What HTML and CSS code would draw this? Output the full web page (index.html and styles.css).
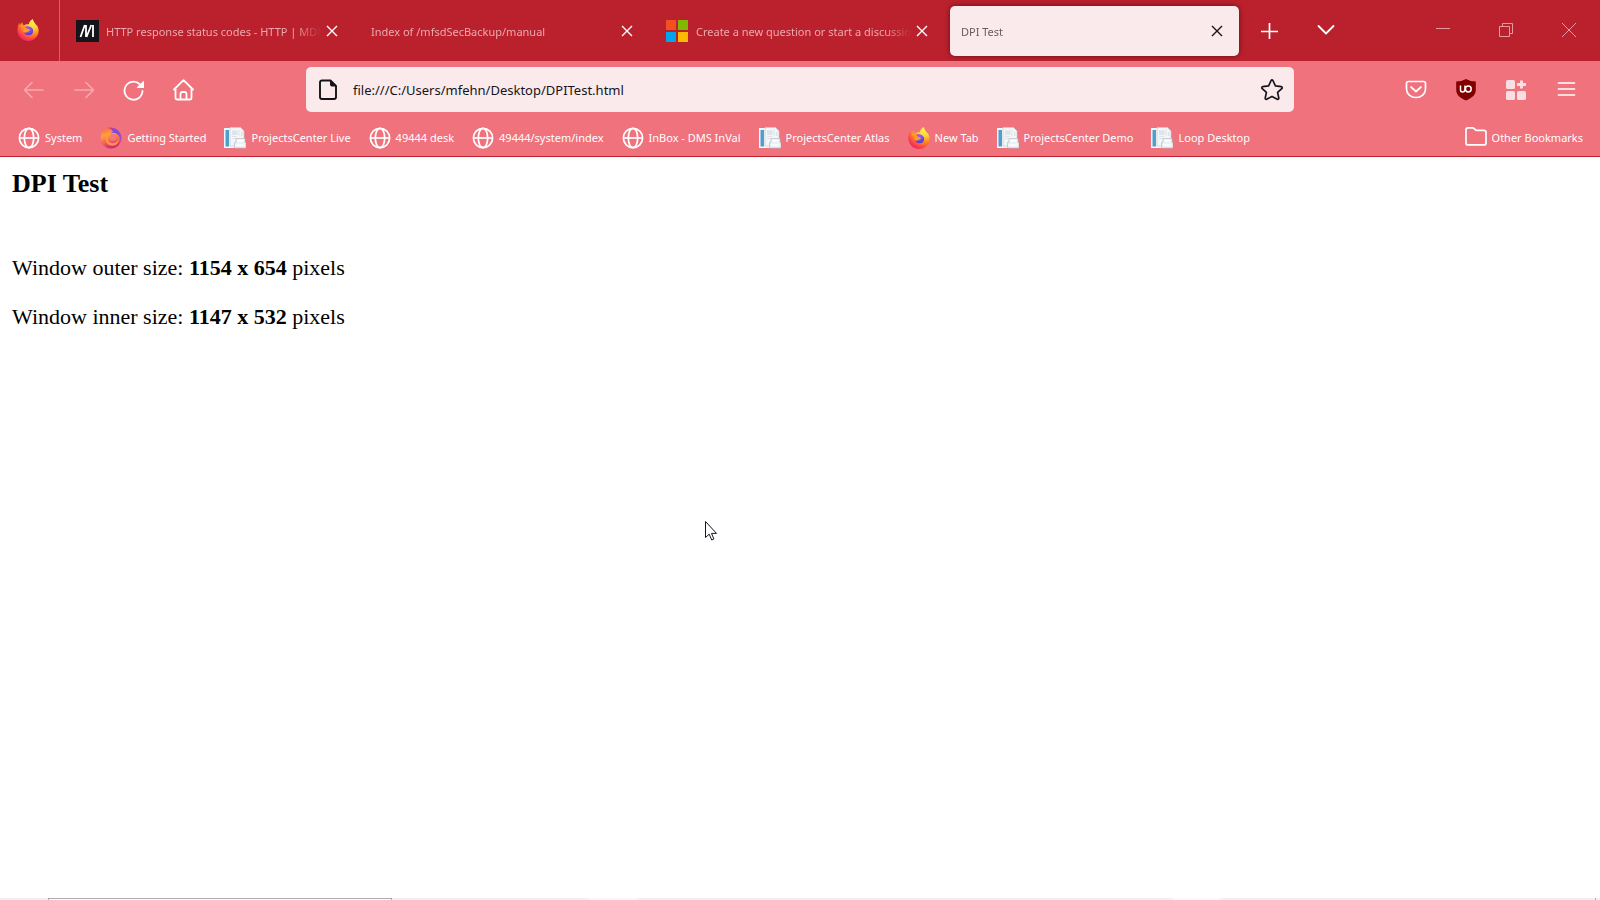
FILE: index.html
```html
<!DOCTYPE html>
<html lang="en">
<head>
<meta charset="utf-8">
<title>DPI Test</title>
<link rel="stylesheet" href="styles.css">
</head>
<body>
<svg class="defs" aria-hidden="true">
  <defs>
    <radialGradient id="flame" cx="75%" cy="10%" r="105%">
      <stop offset="0" stop-color="#fff44f"/><stop offset=".3" stop-color="#ffd03a"/><stop offset=".55" stop-color="#ff8a1f"/><stop offset=".8" stop-color="#ff3c4a"/><stop offset="1" stop-color="#e31587"/>
    </radialGradient>
    <radialGradient id="core" cx="45%" cy="25%" r="80%">
      <stop offset="0" stop-color="#a95af5"/><stop offset=".6" stop-color="#6d4be8"/><stop offset="1" stop-color="#4a3ab8"/>
    </radialGradient>
    <linearGradient id="swirl" x1="0" y1="0" x2=".3" y2="1">
      <stop offset="0" stop-color="#ff5a40"/><stop offset=".4" stop-color="#ffa03c"/><stop offset=".7" stop-color="#f8684e"/><stop offset="1" stop-color="#d82878"/>
    </linearGradient>
    <linearGradient id="tail" x1="0" y1="0" x2="1" y2="1">
      <stop offset="0" stop-color="#e0406a"/><stop offset=".4" stop-color="#7b46f2"/><stop offset="1" stop-color="#b04bc0"/>
    </linearGradient>
    <symbol id="firefox" viewBox="0 0 22 22">
      <path fill="url(#flame)" d="M21.3 9.5C20.8 7.5 19.6 6 18.6 5.3 18.4 4.5 16.4 3.3 15.8 0 13.600 1.200 12 3.400 11.800 5.200 9.500 5 8 5.600 6.800 6.200 5.800 5.600 5.400 4.600 5.500 3.500 4.300 4 3.400 5 2.900 5.900 2.500 5.500 2.400 4.500 2.500 3.600 1 5.300.4 8.500.4 11.300.4 17.300 5.200 22 11 22S21.700 17.400 21.700 12c0-1-.1-1.700-.4-2.500z"/>
      <path fill="url(#core)" d="M7.200 8.800c1.300-1.200 3-1.600 4.800-1.400 2.400.3 4.200 2.200 4.200 4.500 0 2.600-2 4.400-4.600 4.400-2.400 0-4.300-1.300-5-3.300 1.200.8 2.900.7 3.900-.1.800-.6 1.500-.9 2.300-1.200-.1-.8-1.200-1-2.500-1-1.100 0-2.200-.9-3.100-1.900z"/>
      <path fill="#ff9a26" d="M2.700 7.200c1.900-.8 4-.6 5.300.5l2.200 2.400c1.200.1 2.300.3 2.500 1-.8.600-1.700.7-2.500 1.500-1 1-2.700 1-3.900.2-.3-1.600.2-2.700.9-3.400-1.500-.7-3.200-1-4.500-2.200z"/>
    </symbol>
    <symbol id="swirlfox" viewBox="0 0 22 22">
      <circle cx="11" cy="11" r="10.500" fill="url(#swirl)"/>
      <path fill="url(#tail)" d="M8 .900C14-.8 21.500 3.500 21.500 11c0 1.500-.3 2.800-.9 4 0-4-1.600-7.500-5.600-9-1.500-.5-3 0-4 .5.500-1 1-1.500 2-2C11.500 2.500 10 1.500 8 .900z"/>
      <path fill="#f07a78" d="M10.500 8c2-1.300 4.500-.8 5.500.7 1 1.500.8 3.300-.5 4.300-1.500 1-4 .6-4.900-.8-.8-1.200-.9-2.800-.1-4.200z"/>
      <path fill="#ffbe4a" d="M9.500 7.500c-4 3.500-2 9 3.500 8.800 3.200-.2 5-2.200 5.800-4.700.3 4.200-2.500 7.400-6.500 7.200C6 18.400 4 11.500 9.500 7.500z" opacity=".7"/>
    </symbol>
    <symbol id="globe" viewBox="0 0 22 22">
      <g fill="none" stroke="#fff" stroke-width="1.700"><circle cx="11" cy="11" r="9.600"/><ellipse cx="11" cy="11" rx="4.700" ry="9.600"/><path d="M1.500 11h19"/></g>
    </symbol>
    <symbol id="doc" viewBox="0 0 22 22">
      <path fill="#f4f7f9" d="M0 1h14v20H0z"/>
      <path fill="#4d9fd0" d="M1.500 3H5v16.500H1.500z"/>
      <path fill="#f3f5f7" stroke="#c6ced6" stroke-width=".7" d="M6 .5h10.500L20 4v15H6z"/>
      <path fill="#dfe4e9" d="M8 3.500h5.500V8H8zM8 9h5v1H8zM8 11h4v1H8zM14.500 3h1v6h-1zM17 5h1.500v4H17z"/>
      <path fill="#eef1f3" stroke="#b5bfc8" stroke-width=".7" d="M12 11.500h9v4h1V21H10.500v-5.500H12z"/>
      <path fill="#fff" d="M13.500 13h6v1.500h-6zM12 17.500h8.500v1.300H12z"/>
    </symbol>
    <symbol id="x" viewBox="0 0 12 12"><path fill="none" stroke="currentColor" stroke-width="1.400" d="M1 1l10 10M11 1L1 11"/></symbol>
  </defs>
</svg>

<header class="browser">
  <div class="titlebar">
    <button class="view" aria-label="Firefox View"><svg class="i22"><use href="#firefox"/></svg></button>
    <div class="tabs" role="tablist">
      <div class="tab" role="tab">
        <svg class="favicon" viewBox="0 0 23 22"><path fill="#15141a" d="M0 0h23v22H0z"/><path fill="none" stroke="#fff" stroke-width="1.800" d="M4.500 17L8.800 5M10 5v12M10.500 17L15.300 5M17 5v12"/></svg>
        <span class="label">HTTP response status codes - HTTP | MDN</span>
        <button class="close" aria-label="Close tab"><svg class="i12"><use href="#x"/></svg></button>
      </div>
      <div class="tab" role="tab">
        <span class="label">Index of /mfsdSecBackup/manual</span>
        <button class="close" aria-label="Close tab"><svg class="i12"><use href="#x"/></svg></button>
      </div>
      <div class="tab" role="tab">
        <svg class="favicon" viewBox="0 0 23 22"><path fill="#f25022" d="M0 0h10v10H0z"/><path fill="#7fba00" d="M12 0h10v10H12z"/><path fill="#00a4ef" d="M0 12h10v10H0z"/><path fill="#ffb900" d="M12 12h10v10H12z"/></svg>
        <span class="label">Create a new question or start a discussion</span>
        <button class="close" aria-label="Close tab"><svg class="i12"><use href="#x"/></svg></button>
      </div>
      <div class="tab active" role="tab" aria-selected="true">
        <span class="label">DPI Test</span>
        <button class="close" aria-label="Close tab"><svg class="i12"><use href="#x"/></svg></button>
      </div>
    </div>
    <div class="tabtools">
      <button class="tool" aria-label="New tab"><svg class="i18" viewBox="0 0 18 18"><path fill="none" stroke="#fff" stroke-width="1.700" d="M9.500 1v16M1 9.500h17"/></svg></button>
      <button class="tool" aria-label="List all tabs"><svg class="i18" viewBox="0 0 18 18"><path fill="none" stroke="#fff" stroke-width="1.800" stroke-linecap="round" stroke-linejoin="round" d="M1.500 4L9 11.500 16.500 4"/></svg></button>
    </div>
    <div class="winctl">
      <button aria-label="Minimize"><svg class="i14" viewBox="0 0 14 14"><path stroke="currentColor" d="M0 5.500h14"/></svg></button>
      <button aria-label="Restore"><svg class="i14" viewBox="0 0 14 14"><path fill="none" stroke="currentColor" d="M.5 3.500h10v10H.5zM3.500 3V.5h10v10H11"/></svg></button>
      <button aria-label="Close"><svg class="i14" viewBox="0 0 14 14"><path stroke="currentColor" d="M0 0l14 14M14 0L0 14"/></svg></button>
    </div>
  </div>

  <nav class="navbar">
    <div class="group">
      <button class="tool dim" disabled aria-label="Back"><svg class="i22" viewBox="0 0 22 22"><path fill="none" stroke="#fff" stroke-width="1.600" stroke-linecap="round" stroke-linejoin="round" d="M20 11H2M9 3.500L1.500 11 9 18.500"/></svg></button>
      <button class="tool dim" disabled aria-label="Forward"><svg class="i22" viewBox="0 0 22 22"><path fill="none" stroke="#fff" stroke-width="1.600" stroke-linecap="round" stroke-linejoin="round" d="M2 11h18M13 3.500l7.500 7.500-7.500 7.500"/></svg></button>
      <button class="tool" aria-label="Reload"><svg class="i22" viewBox="0 0 22 22"><path fill="none" stroke="#fff" stroke-width="1.800" stroke-linecap="round" d="M19.500 12A9 9 0 1 1 16.500 5"/><path fill="#fff" d="M20 2.200c.5-.5 1-.3 1 .4V8.500c0 .4-.2.600-.6.600h-5.800c-.7 0-.9-.6-.4-1.100z"/></svg></button>
      <button class="tool" aria-label="Home"><svg class="i22" viewBox="0 0 22 22"><path fill="none" stroke="#fff" stroke-width="1.800" stroke-linecap="round" stroke-linejoin="round" d="M1 10.500L10.500 1.200l9.500 9.300M2.500 9.500v9.500q0 1.500 1.500 1.500h13q1.500 0 1.500-1.500V9.500M7.500 20.500V15q0-2 2-2h2q2 0 2 2v5.500"/></svg></button>
    </div>
    <div class="urlbar">
      <svg class="i22" viewBox="0 0 22 22"><path fill="none" stroke="#15141a" stroke-width="1.900" stroke-linejoin="round" d="M5 1.500h8.500L19 7v11q0 2-2 2H5q-2 0-2-2V3.500q0-2 2-2z"/><path fill="#15141a" d="M13 1l6.500 6.500H15q-2 0-2-2z"/></svg>
      <input type="text" aria-label="Address" value="file:///C:/Users/mfehn/Desktop/DPITest.html">
      <button class="star" aria-label="Bookmark this page"><svg class="i22" viewBox="0 0 22 22"><path fill="none" stroke="#15141a" stroke-width="1.700" stroke-linejoin="round" d="M10.100 1.500q.9-1.300 1.800 0l2.500 5.400 6 .8q1.300.5.600 1.600l-4.400 4 1.200 5.900q-.1 1.400-1.500 1.100L11 17.400l-5.300 2.900q-1.400.3-1.500-1.100l1.200-5.900-4.400-4q-.7-1.100.6-1.600l6-.8z"/></svg></button>
    </div>
    <div class="group">
      <button class="tool" aria-label="Save to Pocket"><svg class="i22" viewBox="0 0 22 22"><path fill="none" stroke="#fff" stroke-width="1.700" stroke-linecap="round" stroke-linejoin="round" d="M3.500 2.500h15q2 0 2 2V10a9.500 8.500 0 0 1-19 0V4.500q0-2 2-2zM6 8l5 4.500L16 8"/></svg></button>
      <button class="tool" aria-label="uBlock Origin"><svg class="i22" viewBox="0 0 22 22"><path fill="#800000" d="M11 0q4.500 2.500 9.800 2.600V10.500c0 5.500-3.800 8.500-9.800 11C5 19 1.200 16 1.200 10.500V2.600Q6.500 2.500 11 0z"/><path fill="none" stroke="#fff" stroke-width="1.500" d="M5.500 6.500v4.500q0 2 2 2t2.500-2V6.500v4"/><circle cx="13.300" cy="10" r="2.900" fill="none" stroke="#fff" stroke-width="1.500"/></svg></button>
      <button class="tool" aria-label="Extensions"><svg class="i22" viewBox="0 0 22 22"><g fill="#f9dfe2"><rect x="1" y="1" width="9" height="9" rx="1.500"/><rect x="1" y="12" width="9" height="9" rx="1.500"/><rect x="12" y="12" width="9" height="9" rx="1.500"/><path d="M15 1.500h3V4h3v3h-3v2.500h-3V7h-3V4h3z"/></g></svg></button>
      <button class="tool" aria-label="Menu"><svg class="i22" viewBox="0 0 22 22"><path stroke="#fff" stroke-width="1.700" stroke-linecap="round" d="M3.500 4h16M3.500 10h16M3.500 16h16"/></svg></button>
    </div>
  </nav>

  <nav class="bookmarks" aria-label="Bookmarks">
    <a href="#"><svg class="i22"><use href="#globe"/></svg>System</a>
    <a href="#"><svg class="i22"><use href="#swirlfox"/></svg>Getting Started</a>
    <a href="#"><svg class="i22"><use href="#doc"/></svg>ProjectsCenter Live</a>
    <a href="#"><svg class="i22"><use href="#globe"/></svg>49444 desk</a>
    <a href="#"><svg class="i22"><use href="#globe"/></svg>49444/system/index</a>
    <a href="#"><svg class="i22"><use href="#globe"/></svg>InBox - DMS InVal</a>
    <a href="#"><svg class="i22"><use href="#doc"/></svg>ProjectsCenter Atlas</a>
    <a href="#"><svg class="i22"><use href="#firefox"/></svg>New Tab</a>
    <a href="#"><svg class="i22"><use href="#doc"/></svg>ProjectsCenter Demo</a>
    <a href="#"><svg class="i22"><use href="#doc"/></svg>Loop Desktop</a>
    <a href="#" class="other"><svg class="i22" viewBox="0 0 22 22"><path fill="none" stroke="#fff" stroke-width="1.700" stroke-linejoin="round" d="M3 .9h4.500q1 0 1.700.8l1.800 1.700h8q2 0 2 2v10.500q0 2-2 2H3q-2 0-2-2v-13q0-2 2-2z"/></svg>Other Bookmarks</a>
  </nav>
</header>

<main class="page">
  <h3>DPI Test</h3>
  <p>Window outer size: <b>1154 x 654</b> pixels</p>
  <p>Window inner size: <b>1147 x 532</b> pixels</p>
</main>

<footer class="taskbar">
  <span class="start"></span><span class="search"></span><span class="pinned"></span><span class="light"></span><span class="mid"></span><span class="lighter"></span><span class="fill"></span><span class="edge"></span>
</footer>

<svg class="cursor" viewBox="0 0 13 20"><path fill="#fff" stroke="#15152a" d="M.5.500v16l3.700-3.300 2.500 5.800 2.200-1-2.400-5.600h5z"/></svg>
</body>
</html>
```
FILE: styles.css
```css
* { box-sizing: border-box; }
body {
  margin: 0;
  min-height: 100vh;
  display: flex;
  flex-direction: column;
  background: #fff;
  font-family: "Noto Sans", "Open Sans", sans-serif;
  font-size: 11px;
}
.defs { position: absolute; width: 0; height: 0; }
button { border: 0; padding: 0; background: none; color: inherit; font: inherit; display: flex; align-items: center; justify-content: center; }
svg { flex: none; display: block; }
.i12 { width: 12px; height: 12px; }
.i14 { width: 14px; height: 14px; }
.i18 { width: 18px; height: 18px; }
.i22 { width: 22px; height: 22px; }

.browser { background: #ef727d; border-bottom: 1px solid #bb202d; color: #fff; }

.titlebar { display: flex; height: 61px; background: #bb202d; }
.view { width: 60px; padding: 0 4px 2px 0; border-right: 1px solid #d2606a; }
.tabs { display: flex; flex: 0 1 1174px; gap: 6px; margin: 6px 5px 5px; min-width: 0; }
.tab { flex: 1; min-width: 0; display: flex; align-items: center; padding: 0 12px 0 11px; color: #eba9ae; border-radius: 5px; }
.active { background: #faeaeb; color: #6a5a60; box-shadow: 0 0 5px rgba(0, 0, 0, .5); }
.favicon { width: 23px; height: 22px; margin-right: 7px; }
.label { flex: 1; min-width: 0; overflow: hidden; white-space: nowrap; mask-image: linear-gradient(to left, transparent, #000 28px); }
.close { width: 20px; height: 20px; color: #fff; }
.active .close { color: #15141a; }
.tool { width: 50px; height: 45px; }
.tabtools { display: flex; align-items: center; gap: 7px; }
.winctl { display: flex; margin-left: auto; padding-bottom: 1px; color: #e79aa1; }
.winctl button { width: 63px; }

.navbar { display: flex; align-items: center; gap: 97px; padding: 6px 9px 5px; }
.group { display: flex; }
.dim { opacity: .4; }
.urlbar { flex: 1; display: flex; align-items: center; gap: 14px; height: 45px; padding: 0 11px; border-radius: 5px; background: #faeaeb; }
.urlbar input { flex: 1; min-width: 0; padding: 0; border: 0; outline: 0; background: none; color: #15141a; font: 13px "Noto Sans", "Open Sans", sans-serif; }

.bookmarks { display: flex; align-items: center; gap: 18px; height: 39px; padding: 2px 17px 0 18px; }
.bookmarks a { display: flex; align-items: center; gap: 5px; color: #fff; text-decoration: none; white-space: nowrap; }
.bookmarks .other { margin-left: auto; }

.page { flex: 1; padding: 12px; color: #000; font: 22px/27px "Liberation Serif", "Times New Roman", serif; }
.page h3 { margin: 0 0 55px; font-size: 26px; line-height: 30px; }
.page p { margin: 0 0 22px; }

.taskbar { display: flex; height: 2px; }
.start { width: 48px; background: #f0f0f0; }
.search { width: 344px; border: 1px solid #adadad; border-bottom: 0; }
.pinned { width: 197px; background: #f0f0f0; }
.fill { flex: 1; background: #f0f0f0; }
.light { width: 48px; background: #f7f7f7; }
.mid { width: 536px; background: #f0f0f0; }
.lighter { width: 47px; background: #fafafa; }
.edge { width: 5px; border-left: 1px solid #adadad; background: #f0f0f0; }

.cursor { position: absolute; left: 705px; top: 521px; width: 13px; height: 20px; }
```
